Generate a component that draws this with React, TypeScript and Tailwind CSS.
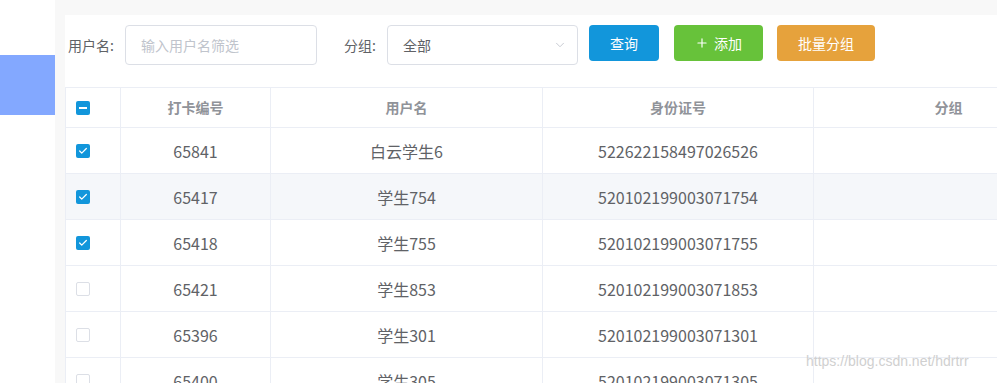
import { ChevronDown, Plus, Check } from 'lucide-react';

const rows = [
  { id: '65841', name: '白云学生6', idCard: '522622158497026526', checked: true },
  { id: '65417', name: '学生754', idCard: '520102199003071754', checked: true, hover: true },
  { id: '65418', name: '学生755', idCard: '520102199003071755', checked: true },
  { id: '65421', name: '学生853', idCard: '520102199003071853', checked: false },
  { id: '65396', name: '学生301', idCard: '520102199003071301', checked: false },
  { id: '65400', name: '学生305', idCard: '520102199003071305', checked: false },
];

const cols = 'grid grid-cols-[55px_150px_272px_271px_270px]';

const Checkbox = ({ state }: { state: 'on' | 'off' | 'half' }) => {
  if (state === 'off') {
    return <span className="block w-[14px] h-[14px] rounded-[2px] border border-[#dcdfe6] bg-white" />;
  }
  return (
    <span className="flex items-center justify-center w-[14px] h-[14px] rounded-[2px] bg-[#1296db]">
      {state === 'on' ? (
        <Check className="w-[10px] h-[10px] text-white" strokeWidth={3} />
      ) : (
        <span className="block w-[8px] h-[2px] bg-white" />
      )}
    </span>
  );
};

const App = () => {
  return (
    <div
      className="relative flex w-[997px] h-[383px] overflow-hidden bg-white"
      style={{ fontFamily: '"Noto Sans CJK SC", "Noto Sans", sans-serif' }}
    >
      {/* left sidebar stub */}
      <div className="w-[55px] shrink-0 bg-white pt-[55px]">
        <div className="h-[60px] bg-[#83a8ff]" />
      </div>

      <div className="flex-1 bg-[#f8f8f8] pt-[15px] pl-[10px] min-w-0">
        <div className="bg-white h-full overflow-hidden">
          {/* toolbar */}
          <div className="flex items-start pt-[10px] pl-[3px] h-[72px] text-[14px]">
            <span className="leading-[40px] text-[#606266] w-[57px]">用户名:</span>
            <div className="w-[192px] h-[40px] border border-[#dcdfe6] rounded-[4px] flex items-center pl-[15px] text-[#c0c4cc]">
              输入用户名筛选
            </div>
            <span className="leading-[40px] text-[#606266] ml-[27px] w-[43px]">分组:</span>
            <div className="w-[191px] h-[40px] border border-[#dcdfe6] rounded-[4px] flex items-center justify-between pl-[15px] pr-[10px] text-[#606266]">
              <span>全部</span>
              <ChevronDown className="w-[14px] h-[14px] text-[#c0c4cc]" strokeWidth={1.5} />
            </div>
            <button className="ml-[11px] w-[70px] h-[36px] rounded-[4px] bg-[#1296db] text-white">查询</button>
            <button className="ml-[15px] w-[89px] h-[36px] rounded-[4px] bg-[#67c23a] text-white flex items-center justify-center gap-[5px]">
              <Plus className="w-[14px] h-[14px]" strokeWidth={2} />
              添加
            </button>
            <button className="ml-[14px] w-[98px] h-[36px] rounded-[4px] bg-[#e6a23c] text-white">批量分组</button>
          </div>

          {/* table */}
          <div className="w-[1018px] border-t border-l border-[#ebeef5]">
            <div className={`${cols} h-[40px] text-[14px] font-bold text-[#909399] border-b border-[#ebeef5]`}>
              <div className="flex items-center pl-[10px] border-r border-[#ebeef5]">
                <Checkbox state="half" />
              </div>
              <div className="flex items-center justify-center border-r border-[#ebeef5]">打卡编号</div>
              <div className="flex items-center justify-center border-r border-[#ebeef5]">用户名</div>
              <div className="flex items-center justify-center border-r border-[#ebeef5]">身份证号</div>
              <div className="flex items-center justify-center border-r border-[#ebeef5]">分组</div>
            </div>
            {rows.map(r => (
              <div
                key={r.id}
                className={`${cols} h-[46px] text-[16px] text-[#606266] border-b border-[#ebeef5] ${r.hover ? 'bg-[#f5f7fa]' : 'bg-white'}`}
              >
                <div className="flex items-center pl-[10px] border-r border-[#ebeef5]">
                  <Checkbox state={r.checked ? 'on' : 'off'} />
                </div>
                <div className="flex items-center justify-center border-r border-[#ebeef5]">{r.id}</div>
                <div className="flex items-center justify-center border-r border-[#ebeef5]">{r.name}</div>
                <div className="flex items-center justify-center border-r border-[#ebeef5]">{r.idCard}</div>
                <div className="border-r border-[#ebeef5]" />
              </div>
            ))}
          </div>
        </div>
      </div>

      {/* watermark */}
      <div className="absolute left-[806px] top-[351px] text-[14px] text-[#d0d0d0]" style={{ fontFamily: '"Liberation Sans", sans-serif' }}>
        https://blog.csdn.net/hdrtrr
      </div>
    </div>
  );
};

export default App;
